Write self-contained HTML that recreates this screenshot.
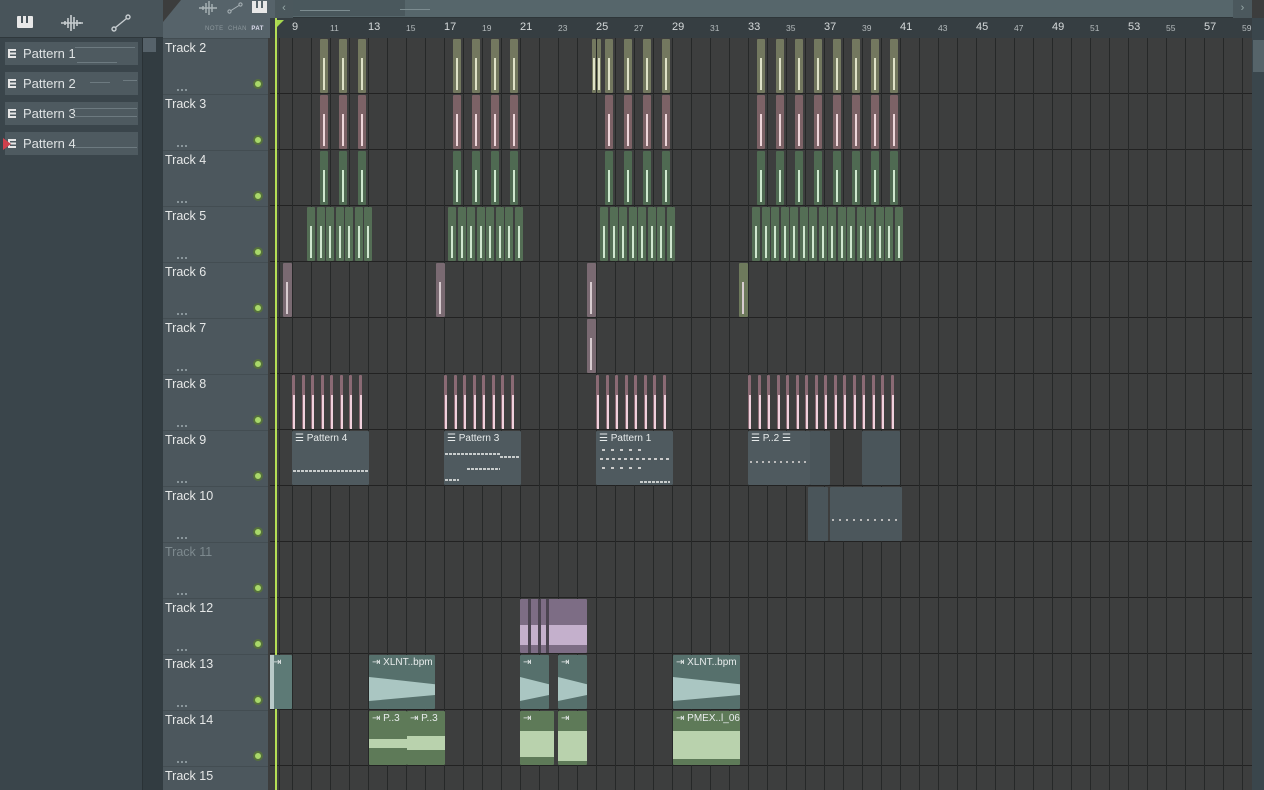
<!DOCTYPE html>
<html><head><meta charset="utf-8">
<style>
*{margin:0;padding:0;box-sizing:border-box}
html,body{width:1264px;height:790px;overflow:hidden}
body{background:#3c3d3d;font-family:"Liberation Sans",sans-serif;position:relative}
.a{position:absolute}
#left{left:0;top:0;width:142px;height:790px;background:#3a454b}
#lefttop{left:0;top:0;width:163px;height:38px;background:#48545a;border-bottom:1px solid #2f383c}
.pat{left:5px;width:133px;height:24px;background:#4e5a60;color:#dfe3e4;font-size:13px;line-height:24px;padding-left:18px;border-bottom:1px solid #3a454b;overflow:hidden}
.pat i{position:absolute;left:3px;top:7px;width:8px;height:9px;border-left:2px solid #e6e6e6;background:repeating-linear-gradient(#e6e6e6 0 2px,transparent 2px 3.5px)}
.pat b{position:absolute;height:1px;background:#6d7a80}
#vscr{left:142px;top:38px;width:21px;height:752px;background:#323c41;border-left:1px solid #2a3236}
#hdr{left:163px;top:38px;width:105px;height:752px;background:#4c575d}
.tr{left:163px;width:105px;height:56px;border-top:1px solid #434d52;color:#e6e8e8;font-size:12.5px;padding:2px 0 0 2px}
.dot{width:10px;height:10px;border-radius:50%;background:#a9d86a;border:2px solid #55703d;left:253px}
.dd{left:177px;width:10px;height:2px;background:repeating-linear-gradient(90deg,#8a969b 0 2px,transparent 2px 4px)}
#grid{left:270px;top:38px;width:982px;height:752px;background-color:#3d3e3e;
background-image:repeating-linear-gradient(90deg,#262828 0 1px,transparent 1px 19px),repeating-linear-gradient(180deg,transparent 0 55px,#222 55px 56px);background-position:22px 0,0 0}
#ruler{left:270px;top:18px;width:982px;height:20px;background:#363e42;color:#d6dadb;font-size:11px}
#ruler span{position:absolute;top:3px}
#ruler span.s{font-size:8.5px;top:5px;color:#b5bbbd}
#ov{left:275px;top:0;width:977px;height:18px;background:#56666b;border-bottom:1px solid #2e3639}
#rscr{left:1252px;top:18px;width:12px;height:772px;background:#3a464c}
.c{position:absolute;border-radius:1px}
.lbl{position:absolute;color:#e8ecec;font-size:10px;white-space:nowrap;left:3px;top:2px}
.n{position:absolute;height:2px;background:repeating-linear-gradient(90deg,#c8cccc 0 3px,transparent 3px 4px)}
</style></head><body>
<div id="left" class="a"></div>
<div id="lefttop" class="a"></div>
<div class="a" style="left:17px;top:16px;width:16px;height:12px;background:#e8e8e8;border-radius:1px"></div>
<div class="a" style="left:21px;top:16px;width:2px;height:7px;background:#48545a"></div>
<div class="a" style="left:26px;top:16px;width:2px;height:7px;background:#48545a"></div>
<svg class="a" style="left:60px;top:14px" width="24" height="18"><path d="M1 9h22M5 7v4M8 4v10M11 1v16M14 3v12M17 6v6M20 8v2" stroke="#c7cdd0" stroke-width="1.6"/></svg>
<svg class="a" style="left:111px;top:14px" width="20" height="18"><circle cx="3" cy="15" r="2" fill="none" stroke="#c7cdd0" stroke-width="1.4"/><circle cx="17" cy="3" r="2" fill="none" stroke="#c7cdd0" stroke-width="1.4"/><path d="M4.5 13.5L15.5 4.5" stroke="#c7cdd0" stroke-width="1.4"/></svg>
<div class="a pat" style="top:42px"><b style="left:70px;top:5px;width:60px"></b><b style="left:72px;top:20px;width:40px"></b><i></i>Pattern 1</div>
<div class="a pat" style="top:72px"><b style="left:85px;top:10px;width:20px"></b><b style="left:118px;top:8px;width:14px"></b><i></i>Pattern 2</div>
<div class="a pat" style="top:102px"><b style="left:68px;top:6px;width:64px"></b><b style="left:68px;top:14px;width:64px"></b><i></i>Pattern 3</div>
<div class="a pat" style="top:132px"><b style="left:70px;top:15px;width:62px"></b><i></i>Pattern 4</div>
<div class="a" style="left:3px;top:138px;width:0;height:0;border-left:8px solid #d0404c;border-top:6px solid transparent;border-bottom:6px solid transparent"></div>
<div id="vscr" class="a"></div>
<div class="a" style="left:143px;top:38px;width:13px;height:14px;background:#56626a"></div>
<div class="a" style="left:163px;top:0;width:112px;height:38px;background:#56636a;clip-path:polygon(18px 0,100% 0,100% 100%,0 100%,0 22px)"></div>
<div class="a" style="left:205px;top:26px;font-size:6px;color:#8c979c;letter-spacing:.5px">NOTE&nbsp; CHAN&nbsp; <b style="color:#dde">PAT</b></div>
<svg class="a" style="left:198px;top:1px" width="20" height="14"><path d="M1 7h18M5 5v4M8 2v10M11 0v14M14 3v8" stroke="#aab4b8" stroke-width="1.4"/></svg>
<svg class="a" style="left:227px;top:2px" width="16" height="12"><circle cx="2.5" cy="9.5" r="1.6" fill="none" stroke="#aab4b8"/><circle cx="13.5" cy="2.5" r="1.6" fill="none" stroke="#aab4b8"/><path d="M4 8.5L12 3.5" stroke="#aab4b8"/></svg>
<div class="a" style="left:252px;top:1px;width:15px;height:12px;background:#e8e8e8"></div>
<div class="a" style="left:256px;top:1px;width:2px;height:7px;background:#56636a"></div>
<div class="a" style="left:261px;top:1px;width:2px;height:7px;background:#56636a"></div>
<div id="hdr" class="a"></div>
<div id="ov" class="a"></div>
<div class="a" style="left:275px;top:0;width:18px;height:18px;background:#4b585d;color:#9aa;font-size:11px;text-align:center;line-height:17px">‹</div>
<div class="a" style="left:293px;top:0;width:112px;height:16px;background:#4a585d"></div>
<div class="a" style="left:300px;top:10px;width:50px;height:1px;background:#7c8c90"></div>
<div class="a" style="left:400px;top:9px;width:30px;height:1px;background:#7c8c90"></div>
<div class="a" style="left:1233px;top:0;width:19px;height:18px;background:#4b585d;color:#9aa;font-size:11px;text-align:center;line-height:17px">›</div>
<div id="ruler" class="a">
<span style="left:22px">9</span><span class="s" style="left:60px">11</span><span style="left:98px">13</span><span class="s" style="left:136px">15</span><span style="left:174px">17</span><span class="s" style="left:212px">19</span><span style="left:250px">21</span><span class="s" style="left:288px">23</span><span style="left:326px">25</span><span class="s" style="left:364px">27</span><span style="left:402px">29</span><span class="s" style="left:440px">31</span><span style="left:478px">33</span><span class="s" style="left:516px">35</span><span style="left:554px">37</span><span class="s" style="left:592px">39</span><span style="left:630px">41</span><span class="s" style="left:668px">43</span><span style="left:706px">45</span><span class="s" style="left:744px">47</span><span style="left:782px">49</span><span class="s" style="left:820px">51</span><span style="left:858px">53</span><span class="s" style="left:896px">55</span><span style="left:934px">57</span><span class="s" style="left:972px">59</span>
</div>
<div class="a" style="left:275px;top:20px;width:0;height:0;border-left:9px solid #a6d84f;border-bottom:9px solid transparent"></div>
<div id="grid" class="a"></div>
<div id="rscr" class="a"></div>
<div class="a" style="left:1253px;top:40px;width:11px;height:32px;background:#56646a"></div>
<div class="a tr" style="top:38px">Track 2</div>
<div class="a tr" style="top:94px">Track 3</div>
<div class="a tr" style="top:150px">Track 4</div>
<div class="a tr" style="top:206px">Track 5</div>
<div class="a tr" style="top:262px">Track 6</div>
<div class="a tr" style="top:318px">Track 7</div>
<div class="a tr" style="top:374px">Track 8</div>
<div class="a tr" style="top:430px">Track 9</div>
<div class="a tr" style="top:486px">Track 10</div>
<div class="a tr" style="top:542px;color:#7d898e">Track 11</div>
<div class="a tr" style="top:598px">Track 12</div>
<div class="a tr" style="top:654px">Track 13</div>
<div class="a tr" style="top:710px">Track 14</div>
<div class="a tr" style="top:766px">Track 15</div>
<div class="a dd" style="top:89px"></div><div class="a dd" style="top:145px"></div><div class="a dd" style="top:201px"></div><div class="a dd" style="top:257px"></div><div class="a dd" style="top:313px"></div><div class="a dd" style="top:369px"></div><div class="a dd" style="top:425px"></div><div class="a dd" style="top:481px"></div><div class="a dd" style="top:537px"></div><div class="a dd" style="top:593px"></div><div class="a dd" style="top:649px"></div><div class="a dd" style="top:705px"></div><div class="a dd" style="top:761px"></div>
<div id="clips"></div>
<div class="a" style="left:275px;top:18px;width:2px;height:772px;background:#b4dd55"></div>
<div class="c" style="left:292px;top:431px;width:77px;height:54px;background:#4f5a5f"><span class="lbl">☰ Pattern 4</span><div class="n" style="left:1px;top:39px;width:75px"></div></div>
<div class="c" style="left:444px;top:431px;width:77px;height:54px;background:#4f5a5f"><span class="lbl">☰ Pattern 3</span><div class="n" style="left:1px;top:22px;width:56px"></div><div class="n" style="left:56px;top:18px;width:20px;top:25px"></div><div class="n" style="left:23px;top:37px;width:33px"></div><div class="n" style="left:1px;top:48px;width:14px"></div></div>
<div class="c" style="left:596px;top:431px;width:77px;height:54px;background:#4f5a5f"><span class="lbl">☰ Pattern 1</span><div class="n" style="left:4px;top:27px;width:70px;background:repeating-linear-gradient(90deg,#ccc 0 3px,transparent 3px 6px)"></div><div class="n" style="left:6px;top:18px;width:40px;background:repeating-linear-gradient(90deg,#ccc 0 3px,transparent 3px 9px)"></div><div class="n" style="left:6px;top:36px;width:40px;background:repeating-linear-gradient(90deg,#ccc 0 3px,transparent 3px 9px)"></div><div class="n" style="left:44px;top:50px;width:30px"></div></div>
<div class="c" style="left:748px;top:431px;width:62px;height:54px;background:#4f5a5f"><span class="lbl">☰ P..2 ☰</span><div class="n" style="left:2px;top:30px;width:60px;background:repeating-linear-gradient(90deg,#bbb 0 2px,transparent 2px 6px)"></div></div>
<div class="c" style="left:810px;top:431px;width:20px;height:54px;background:#4a555a"></div>
<div class="c" style="left:862px;top:431px;width:38px;height:54px;background:#4a555a"></div>
<div class="c" style="left:808px;top:487px;width:20px;height:54px;background:#4a555a"></div>
<div class="c" style="left:830px;top:487px;width:72px;height:54px;background:#4c575c"><div class="n" style="left:2px;top:32px;width:68px;background:repeating-linear-gradient(90deg,#bbb 0 2px,transparent 2px 7px)"></div></div>
<div class="c" style="left:520px;top:599px;width:67px;height:54px;background:#7d6d85"><div class="a" style="left:0;top:26px;width:67px;height:20px;background:#c4b0cc"></div><div class="a" style="left:8px;top:0;width:3px;height:54px;background:#4a4450"></div><div class="a" style="left:18px;top:0;width:3px;height:54px;background:#4a4450"></div><div class="a" style="left:26px;top:0;width:3px;height:54px;background:#4a4450"></div></div>
<div class="c" style="left:270px;top:655px;width:22px;height:54px;background:#5d7a76"><span class="lbl">⇥</span><div class="a" style="left:0;top:0;width:4px;height:54px;background:#b8cac8"></div></div>
<div class="c" style="left:369px;top:655px;width:66px;height:54px;background:#56706c"><span class="lbl">⇥ XLNT..bpm</span><div class="a" style="left:0;top:22px;width:66px;height:24px;background:#aac6c2;clip-path:polygon(0 0,100% 30%,100% 75%,0 100%)"></div></div>
<div class="c" style="left:520px;top:655px;width:29px;height:54px;background:#56706c"><span class="lbl">⇥</span><div class="a" style="left:0;top:22px;width:29px;height:24px;background:#aac6c2;clip-path:polygon(0 0,100% 30%,100% 75%,0 100%)"></div></div>
<div class="c" style="left:558px;top:655px;width:29px;height:54px;background:#56706c"><span class="lbl">⇥</span><div class="a" style="left:0;top:22px;width:29px;height:24px;background:#aac6c2;clip-path:polygon(0 0,100% 30%,100% 75%,0 100%)"></div></div>
<div class="c" style="left:673px;top:655px;width:67px;height:54px;background:#56706c"><span class="lbl">⇥ XLNT..bpm</span><div class="a" style="left:0;top:22px;width:67px;height:24px;background:#aac6c2;clip-path:polygon(0 0,100% 30%,100% 75%,0 100%)"></div></div>
<div class="c" style="left:369px;top:711px;width:38px;height:54px;background:#5e7a58"><span class="lbl">⇥ P..3</span><div class="a" style="left:0;top:28px;width:38px;height:9px;background:#b9d2ad"></div></div>
<div class="c" style="left:407px;top:711px;width:38px;height:54px;background:#5e7a58"><span class="lbl">⇥ P..3</span><div class="a" style="left:0;top:25px;width:38px;height:14px;background:#b9d2ad"></div></div>
<div class="c" style="left:520px;top:711px;width:34px;height:54px;background:#5e7a58"><span class="lbl">⇥</span><div class="a" style="left:0;top:20px;width:34px;height:26px;background:#b9d2ad"></div></div>
<div class="c" style="left:558px;top:711px;width:29px;height:54px;background:#5e7a58"><span class="lbl">⇥</span><div class="a" style="left:0;top:20px;width:29px;height:30px;background:#b9d2ad"></div></div>
<div class="c" style="left:673px;top:711px;width:67px;height:54px;background:#5e7a58"><span class="lbl">⇥ PMEX..l_06</span><div class="a" style="left:0;top:20px;width:67px;height:28px;background:#b9d2ad"></div></div>
<div class="a dot" style="top:79px"></div><div class="a dot" style="top:135px"></div><div class="a dot" style="top:191px"></div><div class="a dot" style="top:247px"></div><div class="a dot" style="top:303px"></div><div class="a dot" style="top:359px"></div><div class="a dot" style="top:415px"></div><div class="a dot" style="top:471px"></div><div class="a dot" style="top:527px"></div><div class="a dot" style="top:583px"></div><div class="a dot" style="top:639px"></div><div class="a dot" style="top:695px"></div><div class="a dot" style="top:751px"></div>
<script>
var h='';
function clip(x,y,w,hh,bg,fg){h+='<div class="c" style="left:'+x+'px;top:'+y+'px;width:'+w+'px;height:'+hh+'px;background:'+bg+'"><div class="a" style="left:'+Math.floor(w/2-1)+'px;top:'+(hh*0.35)+'px;width:2px;height:'+(hh*0.6)+'px;background:'+fg+'"></div></div>';}
var p2=[320,339,358,453,472,491,510,605,624,643,662,757,776,795,814,833,852,871,890];
p2.forEach(function(x){clip(x,39,8,54,'#73785f','#dfe2c8');clip(x,95,8,54,'#7c6266','#eed6da');clip(x,151,8,54,'#4f6a52','#cfe8cf');});
clip(592,39,4,54,'#73785f','#dfe2c8');clip(597,39,4,54,'#73785f','#dfe2c8');
function run(a,b,s,y,bg,fg,w){for(var x=a;x<b;x+=s)clip(x,y,w,54,bg,fg);}
run(307,369,9.5,207,'#546e55','#d0e6cf',8);run(448,520,9.5,207,'#546e55','#d0e6cf',8);run(600,672,9.5,207,'#546e55','#d0e6cf',8);run(752,902,9.5,207,'#546e55','#d0e6cf',8);
[283,436,587,739].forEach(function(x,i){clip(x,263,9,54,i==3?'#6e7a5c':'#7a6a72','#d8ccd0');});
clip(587,319,9,54,'#7a6a72','#d8ccd0');
function pk(a,b){for(var x=a;x<b;x+=9.5){h+='<div class="c" style="left:'+x+'px;top:375px;width:3px;height:54px;background:#8a6a74"><div class="a" style="left:1px;top:20px;width:2px;height:34px;background:#f0d0dc"></div></div>';}}
pk(292,364);pk(444,518);pk(596,672);pk(748,898);
document.getElementById('clips').innerHTML=h;
</script>
</body></html>
